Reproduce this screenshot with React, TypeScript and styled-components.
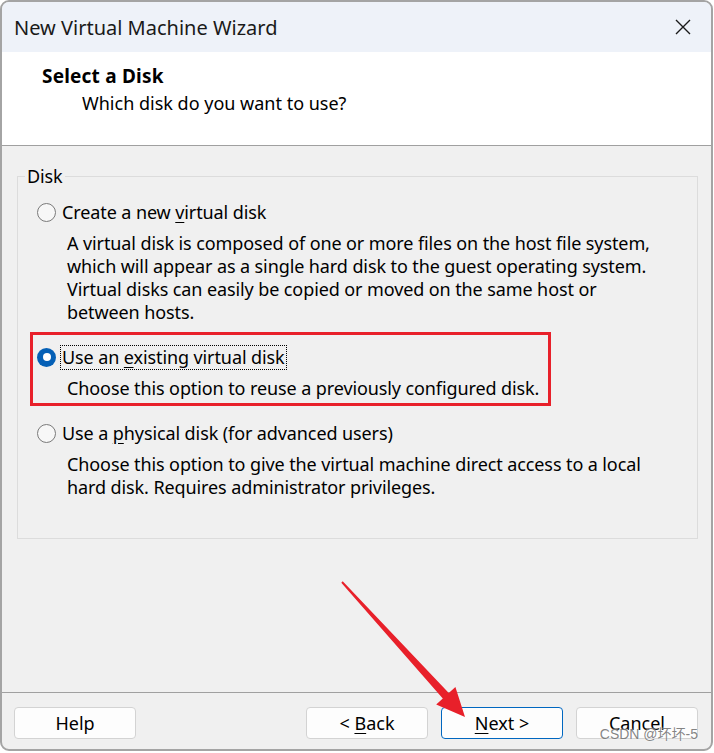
import styled, { createGlobalStyle } from 'styled-components';

//#region styled
const GlobalStyle = createGlobalStyle`
  html, body {
    margin: 0;
    padding: 0;
    background: #ffffff;
  }

  body {
    font-family: 'Noto Sans', 'Open Sans', sans-serif;
    color: #000;
  }
`;

const Screen = styled.div`
  position: relative;
  width: 714px;
  height: 753px;
  overflow: hidden;
`;

const Window = styled.div`
  display: flex;
  flex-direction: column;
  box-sizing: border-box;
  width: 713px;
  height: 751px;
  border: 2px solid #a4a4a4;
  border-radius: 9px;
  overflow: hidden;
  background: #f0f0f0;
`;

const TitleBar = styled.div`
  display: flex;
  align-items: center;
  justify-content: space-between;
  height: 50px;
  padding: 0 20px 0 12px;
  background: #eef2f9;
  font-size: 20px;
  color: #1a1a1a;
`;

const Header = styled.div`
  box-sizing: border-box;
  height: 94px;
  padding: 13px 0 0 40px;
  background: #ffffff;
  border-bottom: 1px solid #a0a0a0;
  font-size: 18px;
  line-height: 23px;
`;

const HeaderTitle = styled.div`
  font-size: 19px;
  font-weight: bold;
  letter-spacing: 0.2px;
`;

const HeaderSubtitle = styled.div`
  margin-top: 4px;
  padding-left: 40px;
`;

const Body = styled.div`
  flex: 1;
  padding: 20px 13px 0 15px;
`;

const GroupBox = styled.fieldset`
  box-sizing: border-box;
  height: 373px;
  margin: 0;
  padding: 14px 12px 0 19px;
  border: 1px solid #dcdcdc;
  font-size: 18px;
  line-height: 23px;
  letter-spacing: -0.1px;
`;

const Legend = styled.legend`
  margin-left: -12px;
  padding: 0 2px;
  line-height: 20px;
`;

const Option = styled.div`
  position: relative;
  margin-bottom: 21px;
`;

const RadioRow = styled.label`
  display: flex;
  align-items: center;
  gap: 4px;
  height: 24px;
`;

const Radio = styled.span<{ $checked?: boolean }>`
  box-sizing: border-box;
  display: inline-flex;
  align-items: center;
  justify-content: center;
  width: 19px;
  height: 19px;
  border-radius: 50%;
  border: ${({ $checked }) => ($checked ? 'none' : '1px solid #7a7a7a')};
  background: ${({ $checked }) => ($checked ? '#0560b6' : '#f7f7f7')};

  &::after {
    content: '';
    display: ${({ $checked }) => ($checked ? 'block' : 'none')};
    width: 8px;
    height: 8px;
    border-radius: 50%;
    background: #ffffff;
  }
`;

const Label = styled.span<{ $focused?: boolean }>`
  padding: 0 1px;
  border: 1px ${({ $focused }) => ($focused ? 'dotted #000' : 'solid transparent')};
`;

const Key = styled.span`
  text-decoration: underline;
  text-underline-offset: 3px;
`;

const Description = styled.p`
  margin: 8px 0 0;
  padding-left: 30px;
`;

const Highlight = styled.div`
  position: absolute;
  top: -13px;
  left: -7px;
  box-sizing: border-box;
  width: 521px;
  height: 74px;
  border: 3px solid #e8202a;
  pointer-events: none;
`;

const Footer = styled.div`
  display: flex;
  align-items: flex-start;
  gap: 13px;
  box-sizing: border-box;
  height: 57px;
  padding: 14px 13px 0 12px;
  border-top: 1px solid #a0a0a0;
`;

const Button = styled.button.attrs({ type: 'button' })<{ $primary?: boolean }>`
  box-sizing: border-box;
  width: 122px;
  height: 32px;
  padding: 0;
  background: #fdfdfd;
  border: 1px solid ${({ $primary }) => ($primary ? '#0067c0' : '#d3d3d3')};
  border-radius: 4px;
  font-family: inherit;
  font-size: 18px;
  color: #000;
`;

const Spacer = styled.div`
  flex: 1;
`;

const Watermark = styled.div`
  position: absolute;
  right: 16px;
  bottom: 10px;
  font-family: 'Liberation Sans', 'Noto Sans CJK SC', sans-serif;
  font-size: 14px;
  color: rgba(110, 110, 110, 0.85);
  text-shadow: 0 0 2px #ffffff;
  pointer-events: none;
`;

const Annotation = styled.svg`
  position: absolute;
  inset: 0;
  pointer-events: none;
`;
//#endregion

const CloseIcon = () => (
  <svg width="16" height="16" viewBox="0 0 16 16">
    <path d="M1 1 L15 15 M15 1 L1 15" stroke="#1a1a1a" strokeWidth="1.4" />
  </svg>
);

const App = () => {
  return (
    <Screen>
      <GlobalStyle />
      <Window>
        <TitleBar>
          <span>New Virtual Machine Wizard</span>
          <CloseIcon />
        </TitleBar>
        <Header>
          <HeaderTitle>Select a Disk</HeaderTitle>
          <HeaderSubtitle>Which disk do you want to use?</HeaderSubtitle>
        </Header>
        <Body>
          <GroupBox>
            <Legend>Disk</Legend>
            <Option>
              <RadioRow>
                <Radio />
                <Label>
                  Create a new <Key>v</Key>irtual disk
                </Label>
              </RadioRow>
              <Description>
                A virtual disk is composed of one or more files on the host file system,
                <br />
                which will appear as a single hard disk to the guest operating system.
                <br />
                Virtual disks can easily be copied or moved on the same host or
                <br />
                between hosts.
              </Description>
            </Option>
            <Option>
              <Highlight />
              <RadioRow>
                <Radio $checked />
                <Label $focused>
                  Use an <Key>e</Key>xisting virtual disk
                </Label>
              </RadioRow>
              <Description>
                Choose this option to reuse a previously configured disk.
              </Description>
            </Option>
            <Option>
              <RadioRow>
                <Radio />
                <Label>
                  Use a <Key>p</Key>hysical disk (for advanced users)
                </Label>
              </RadioRow>
              <Description>
                Choose this option to give the virtual machine direct access to a local
                <br />
                hard disk. Requires administrator privileges.
              </Description>
            </Option>
          </GroupBox>
        </Body>
        <Footer>
          <Button>Help</Button>
          <Spacer />
          <Button>
            &lt; <Key>B</Key>ack
          </Button>
          <Button $primary>
            <Key>N</Key>ext &gt;
          </Button>
          <Button>Cancel</Button>
        </Footer>
      </Window>
      <Annotation width="714" height="753" viewBox="0 0 714 753">
        <polygon
          points="341.3,582.7 342.7,581.3 448.8,693.1 455.4,687 465,717 436.2,704.6 442.8,698.5"
          fill="#e8202a"
        />
      </Annotation>
      <Watermark>CSDN @坏坏-5</Watermark>
    </Screen>
  );
};

export default App;
